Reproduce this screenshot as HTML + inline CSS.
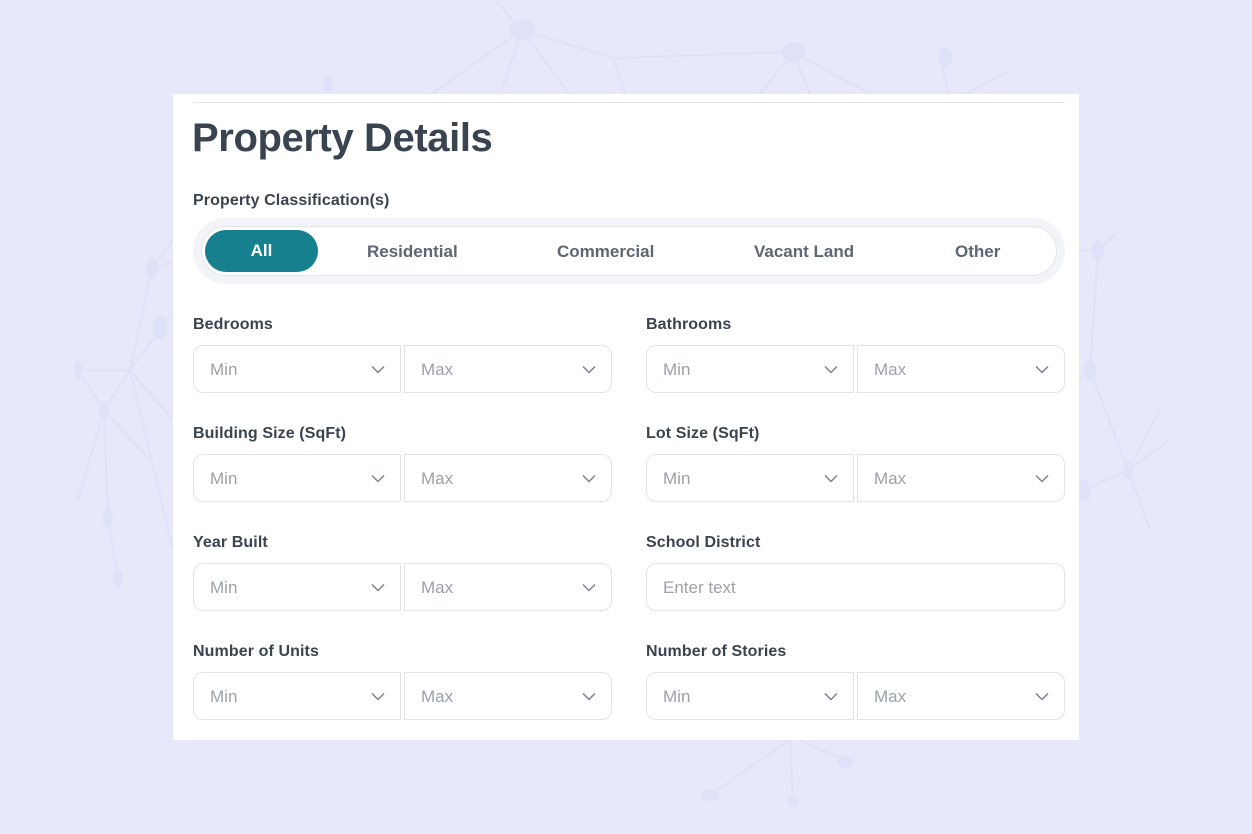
<!DOCTYPE html>
<html><head><meta charset="utf-8"><style>
*{margin:0;padding:0;box-sizing:border-box}
body{width:1252px;height:834px;background:#e7e9fb;position:relative;overflow:hidden;font-family:"Liberation Sans",Arial,sans-serif}
svg.bg{position:absolute;left:0;top:0}
.card{position:absolute;left:173px;top:94px;width:906px;height:646px;background:#fff}
.a{position:absolute}
.div{left:20px;top:8px;width:872px;height:1px;background:#e1e3e8}
h1{position:absolute;left:19px;top:22px;font-size:40px;font-weight:700;color:#3a4350;letter-spacing:-0.4px}
.lbl{position:absolute;font-size:16px;font-weight:700;color:#3a4350;letter-spacing:0.1px}
.tabs{left:20px;top:124px;width:872px;height:66px;border-radius:33px;background:#f3f4f8}
.inner{left:28px;top:132px;width:856px;height:50px;border-radius:25px;background:#fff;border:1px solid #e4e6ea}
.all{left:32px;top:136px;width:113px;height:42px;border-radius:21px;background:#16808f;color:#fff;font-weight:700;font-size:17px;text-align:center;line-height:42px}
.tab{position:absolute;top:137px;line-height:42px;font-size:17px;font-weight:700;color:#5e6673}
.box{position:absolute;height:48px;border:1px solid #e1e3e8;background:#fff;font-size:17px;color:#9ba1ab;line-height:48px;padding-left:16px}
.l{width:208px;border-radius:10px 0 0 10px}
.r{width:208px;border-radius:0 10px 10px 0}
.box svg{position:absolute;right:15px;top:19px}
.full{width:419px;border-radius:10px}
</style></head><body>
<svg class="bg" width="1252" height="834" stroke="#dee1f7" stroke-width="2" fill="#dee1f7">
<g fill="none">
<path d="M495 0 L522 30 L430 95 M522 30 L500 95 M522 30 L570 95 M522 30 L613 58 L625 94 M613 58 L793 52 L760 94 M793 52 L810 94 M793 52 L870 94 M940 55 L948 94 M965 94 L1010 70"/>
<path d="M173 240 L152 268 L130 370 L104 410 L78 500 M130 370 L78 370 M130 370 L173 420 M130 370 L160 330 L173 310 M130 370 L173 550 M104 410 L108 520 L118 580 M104 410 L150 460 M78 370 L104 410 M152 268 L173 262"/>
<path d="M1079 250 L1098 250 L1115 235 M1098 250 L1090 370 L1128 470 L1150 530 M1128 470 L1085 490 M1128 470 L1160 410 M1090 370 L1079 380 M1128 470 L1170 440 M1085 490 L1079 500"/>
<path d="M790 740 L793 800 M790 740 L710 795 M800 740 L845 760"/>
</g>
<ellipse cx="522" cy="30" rx="12" ry="9"/><ellipse cx="793" cy="52" rx="11" ry="9"/><ellipse cx="945" cy="58" rx="6" ry="9"/>
<ellipse cx="152" cy="268" rx="5" ry="10"/><ellipse cx="160" cy="328" rx="6" ry="11"/><ellipse cx="104" cy="410" rx="4" ry="9"/><ellipse cx="108" cy="518" rx="4" ry="9"/><ellipse cx="118" cy="578" rx="4" ry="8"/><ellipse cx="78" cy="370" rx="3" ry="8"/>
<ellipse cx="1098" cy="250" rx="5" ry="9"/><ellipse cx="1090" cy="370" rx="5" ry="10"/><ellipse cx="1128" cy="470" rx="4" ry="9"/><ellipse cx="1085" cy="490" rx="5" ry="10"/>
<ellipse cx="710" cy="795" rx="8" ry="5"/><ellipse cx="845" cy="762" rx="7" ry="5"/><ellipse cx="793" cy="802" rx="5" ry="4"/><ellipse cx="328" cy="85" rx="4" ry="7"/>
</svg>
<div class="card">
<div class="a div"></div>
<h1>Property Details</h1>
<div class="lbl" style="left:20px;top:98px">Property Classification(s)</div>
<div class="a tabs"></div><div class="a inner"></div>
<div class="a all">All</div>
<div class="tab" style="left:194px">Residential</div>
<div class="tab" style="left:384px">Commercial</div>
<div class="tab" style="left:581px">Vacant Land</div>
<div class="tab" style="left:782px">Other</div>
</div>
<div id="rows"></div>
<script>
var chev='<svg width="14" height="9" viewBox="0 0 14 9"><path d="M1 1.5 L7 7.5 L13 1.5" fill="none" stroke="#7c838e" stroke-width="1.5"/></svg>';
var rows=[["Bedrooms","Bathrooms"],["Building Size (SqFt)","Lot Size (SqFt)"],["Year Built","School District"],["Number of Units","Number of Stories"]];
var h='';
rows.forEach(function(r,i){
 var ly=316+i*109, by=345+i*109;
 [[193,r[0]],[646,r[1]]].forEach(function(c){
  h+='<div class="lbl" style="left:'+c[0]+'px;top:'+ly+'px">'+c[1]+'</div>';
  if(c[1]=="School District"){h+='<div class="box full" style="left:'+c[0]+'px;top:'+by+'px">Enter text</div>';}
  else{h+='<div class="box l" style="left:'+c[0]+'px;top:'+by+'px">Min'+chev+'</div><div class="box r" style="left:'+(c[0]+211)+'px;top:'+by+'px">Max'+chev+'</div>';}
 });
});
document.getElementById('rows').innerHTML=h;
</script>
</body></html>
